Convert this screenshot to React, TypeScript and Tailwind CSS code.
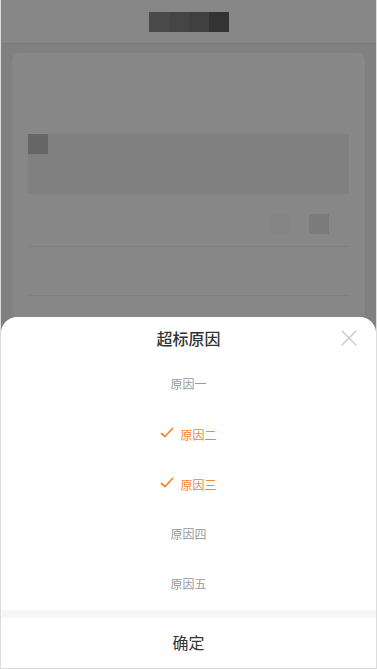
import { useState } from 'react';

const REASONS = ['原因一', '原因二', '原因三', '原因四', '原因五'];

const CheckIcon = () => (
  <svg width="14" height="12" viewBox="0 0 14 12" fill="none" className="-mt-1">
    <path d="M1.5 6.5 L5 9.5 L12.5 1.5" stroke="#f5862b" strokeWidth="1.8" strokeLinecap="round" strokeLinejoin="round" />
  </svg>
);

const CloseIcon = () => (
  <svg width="16" height="16" viewBox="0 0 16 16" fill="none">
    <path d="M1 1 L15 15 M15 1 L1 15" stroke="#c8c8c8" strokeWidth="1.4" strokeLinecap="round" />
  </svg>
);

export default function App() {
  const [selected, setSelected] = useState<string[]>(['原因二', '原因三']);

  const toggle = (r: string) => {
    setSelected((s) => (s.includes(r) ? s.filter((x) => x !== r) : [...s, r]));
  };

  return (
    <div
      className="relative h-[669px] w-full overflow-hidden border-x border-b border-[#dcdcdc] bg-[#f0f1f0]"
      style={{ fontFamily: '"Noto Sans", "Noto Sans CJK SC", sans-serif' }}
    >
      {/* page behind the mask */}
      <div className="flex h-[44px] items-center justify-center border-b border-[#e6e6e6] bg-white">
        <div className="flex h-5">
          <div className="w-5 bg-[#8c8c8c]" />
          <div className="w-5 bg-[#838383]" />
          <div className="w-5 bg-[#7a7a7a]" />
          <div className="w-5 bg-[#606060]" />
        </div>
      </div>
      <div className="px-[11px] pt-[9px]">
        <div className="rounded-lg bg-white px-4 pb-6 pt-[81px]">
          <div className="h-[60px] bg-[#f0f1f0]">
            <div className="h-5 w-5 bg-[#c0c0c0]" />
          </div>
          <div className="flex justify-end gap-5 pr-5 pt-5">
            <div className="h-5 w-5 bg-[#fbfbfb]" />
            <div className="h-5 w-5 bg-[#e8e8e8]" />
          </div>
          <div className="mt-3 border-t border-[#f2f2f2]" />
          <div className="mt-12 border-t border-[#f2f2f2]" />
        </div>
      </div>

      {/* mask */}
      <div className="absolute inset-0 bg-black/[0.47]" />

      {/* action sheet */}
      <div className="absolute inset-x-0 bottom-0 rounded-t-2xl bg-white">
        <div className="relative flex h-[43px] items-center justify-center">
          <span className="text-base font-medium text-[#333]">超标原因</span>
          <button className="absolute right-[19px] top-[13px]">
            <CloseIcon />
          </button>
        </div>
        <ul>
          {REASONS.map((r) => {
            const on = selected.includes(r);
            return (
              <li
                key={r}
                onClick={() => toggle(r)}
                className="flex h-[50px] cursor-pointer items-center justify-center gap-1.5"
              >
                {on && <CheckIcon />}
                <span className={`text-xs ${on ? 'mt-0.5 text-[#f5862b]' : 'text-[#999]'}`}>{r}</span>
              </li>
            );
          })}
        </ul>
        <div className="h-2 bg-[#f5f6f7]" />
        <button className="flex h-[50px] w-full items-center justify-center text-base text-[#333]">
          确定
        </button>
      </div>
    </div>
  );
}
